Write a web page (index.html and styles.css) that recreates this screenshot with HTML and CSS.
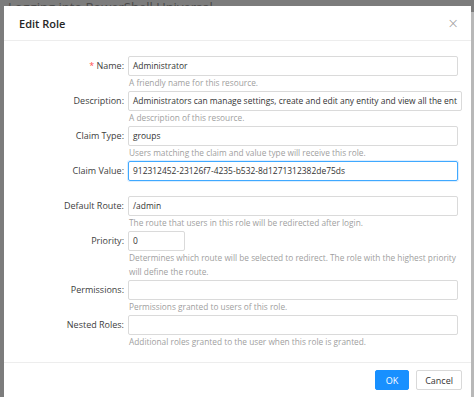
FILE: index.html
```html
<!DOCTYPE html>
<html>
<head>
<meta charset="utf-8">
<link rel="stylesheet" href="styles.css">
</head>
<body>
<div class="page">Logging into PowerShell Universal</div>
<div class="scroll"></div>
<div class="modal">
  <div class="modal-header">
    <span class="title">Edit Role</span>
    <span class="close">×</span>
  </div>
  <div class="modal-body">
    <div class="item">
      <label class="label"><span class="req">*</span> Name:</label>
      <div class="control">
        <div class="input">Administrator</div>
        <div class="help">A friendly name for this resource.</div>
      </div>
    </div>
    <div class="item">
      <label class="label">Description:</label>
      <div class="control">
        <div class="input">Administrators can manage settings, create and edit any entity and view all the ent</div>
        <div class="help">A description of this resource.</div>
      </div>
    </div>
    <div class="item">
      <label class="label">Claim Type:</label>
      <div class="control">
        <div class="input">groups</div>
        <div class="help">Users matching the claim and value type will receive this role.</div>
      </div>
    </div>
    <div class="item">
      <label class="label">Claim Value:</label>
      <div class="control">
        <div class="input focus">912312452-23126f7-4235-b532-8d1271312382de75ds</div>
        <div class="help"></div>
      </div>
    </div>
    <div class="item">
      <label class="label">Default Route:</label>
      <div class="control">
        <div class="input">/admin</div>
        <div class="help">The route that users in this role will be redirected after login.</div>
      </div>
    </div>
    <div class="item">
      <label class="label">Priority:</label>
      <div class="control">
        <div class="input small">0</div>
        <div class="help">Determines which route will be selected to redirect. The role with the highest priority will define the route.</div>
      </div>
    </div>
    <div class="item">
      <label class="label">Permissions:</label>
      <div class="control">
        <div class="input"></div>
        <div class="help">Permissions granted to users of this role.</div>
      </div>
    </div>
    <div class="item">
      <label class="label">Nested Roles:</label>
      <div class="control">
        <div class="input"></div>
        <div class="help">Additional roles granted to the user when this role is granted.</div>
      </div>
    </div>
  </div>
  <div class="modal-footer">
    <button class="btn primary">OK</button>
    <button class="btn">Cancel</button>
  </div>
</div>
</body>
</html>
```

FILE: styles.css
```css
html, body {
  margin: 0;
  padding: 0;
  height: 100%;
}
body {
  background: #7c7c7c;
  font-family: "Open Sans", "Noto Sans", sans-serif;
  overflow: hidden;
  position: relative;
}
.page {
  color: #4a4a4a;
  font-size: 13px;
  line-height: 13px;
  padding-left: 8px;
  padding-top: 1px;
  white-space: nowrap;
}
.scroll {
  position: absolute;
  right: 0;
  top: 12px;
  bottom: 0;
  width: 3px;
  background: #b8b8b8;
}
.modal {
  position: absolute;
  left: 4px;
  top: 6px;
  width: 467px;
  bottom: 0;
  background: #fff;
  display: flex;
  flex-direction: column;
}
.modal-header {
  height: 34px;
  border-bottom: 1px solid #ededed;
  display: flex;
  align-items: center;
  justify-content: space-between;
  padding: 0 12px 0 15px;
}
.title {
  font-size: 11px;
  font-weight: 600;
  color: #262626;
}
.close {
  font-size: 14px;
  color: #9a9a9a;
  font-family: "DejaVu Sans", sans-serif;
  font-weight: 300;
}
.modal-body {
  padding: 15px 13px 0 0;
  flex: 1;
}
.item {
  display: grid;
  grid-template-columns: 120px 1fr;
  column-gap: 4px;
}
.label {
  text-align: right;
  font-size: 9px;
  color: #404040;
  line-height: 20px;
  white-space: nowrap;
}
.req {
  color: #ff4d4f;
}
.input {
  height: 18px;
  border: 1px solid #dadada;
  border-radius: 2px;
  font-size: 8.45px;
  line-height: 18px;
  color: #333;
  padding: 0 4px;
  white-space: nowrap;
  overflow: hidden;
}
.input.focus {
  border-color: #40a9ff;
  box-shadow: 0 0 0 1px rgba(24, 144, 255, 0.15);
}
.input.small {
  width: 47px;
}
.help {
  font-size: 8.3px;
  color: #a0a0a0;
  line-height: 14px;
  min-height: 14px;
  padding-bottom: 1px;
  padding-left: 1px;
}
.modal-footer {
  border-top: 1px solid #ededed;
  height: 34px;
  display: flex;
  align-items: center;
  justify-content: flex-end;
  gap: 7px;
  padding-right: 9px;
}
.btn {
  font-family: "Open Sans", "Noto Sans", sans-serif;
  font-size: 9px;
  height: 20px;
  padding: 0 8px;
  border: 1px solid #d9d9d9;
  background: #fff;
  border-radius: 2px;
  color: #333;
}
.btn.primary {
  background: #1890ff;
  border-color: #1890ff;
  color: #fff;
  padding: 0 10px;
}
```
